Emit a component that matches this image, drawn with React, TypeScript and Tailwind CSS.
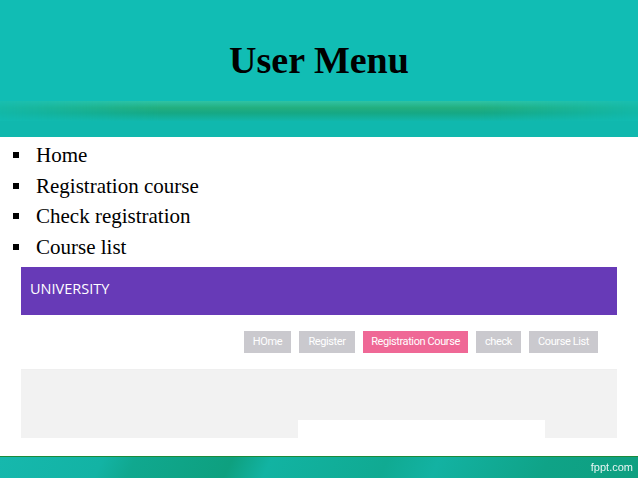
export default function App() {
  const items = ["Home", "Registration course", "Check registration", "Course list"];
  const buttons = [
    { label: "HOme", w: "w-[47px]", active: false },
    { label: "Register", w: "w-[56px]", active: false },
    { label: "Registration Course", w: "w-[105px]", active: true },
    { label: "check", w: "w-[45px]", active: false },
    { label: "Course List", w: "w-[69px]", active: false },
  ];

  return (
    <div className="w-[638px] h-[478px] overflow-hidden bg-white flex flex-col">
      {/* slide header */}
      <div className="h-[137px] shrink-0 flex flex-col bg-[#11bdb4]">
        <div className="h-[101px] flex justify-center pt-[41px]">
          <h1 className="text-[38px] leading-none font-bold text-black font-['Liberation_Serif',serif]">
            User Menu
          </h1>
        </div>
        <div className="h-[20px] bg-[linear-gradient(to_bottom,#2fc3a4_0%,#22ae7e_35%,#16a884_60%,#12b7aa_100%)] [mask-image:linear-gradient(to_right,rgba(0,0,0,0.25),black_25%,black_75%,rgba(0,0,0,0.25))]" />
        <div className="flex-1 bg-[#10b8ae]" />
      </div>

      {/* bullets */}
      <ul className="pt-[3px] font-['Liberation_Serif',serif] text-[21px] leading-[30.5px] text-black">
        {items.map((t) => (
          <li key={t} className="flex items-center">
            <span className="ml-[13px] w-[6px] h-[6px] bg-black" />
            <span className="ml-[17px]">{t}</span>
          </li>
        ))}
      </ul>

      {/* screenshot of the app */}
      <div className="mx-[21px] mt-[5px] flex flex-col font-['Open_Sans',sans-serif]">
        <div className="h-[48px] bg-[#673ab7] flex items-center pl-[9px] pb-[4px]">
          <span className="text-white text-[14.5px]">UNIVERSITY</span>
        </div>
        <div className="h-[55px] flex justify-end items-start pt-[16px] pr-[19px] gap-[8px] border-b border-[#efefef] font-['Roboto',sans-serif]">
          {buttons.map((b) => (
            <div
              key={b.label}
              className={`${b.w} h-[22px] flex items-center justify-center text-[11px] tracking-[-0.4px] text-white ${
                b.active ? "bg-[#ef6896]" : "bg-[#cac9ce]"
              }`}
            >
              {b.label}
            </div>
          ))}
        </div>
        <div className="h-[50px] bg-[#f2f2f2]" />
        <div className="h-[18px] flex">
          <div className="w-[277px] bg-[#f2f2f2]" />
          <div className="w-[247px] bg-white" />
          <div className="flex-1 bg-[#f2f2f2]" />
        </div>
      </div>

      {/* slide footer */}
      <div className="mt-auto h-[22px] shrink-0 border-t border-[#1c8a3a] bg-[linear-gradient(115deg,#16b8ad_0%,#13b3a4_16%,#10a88f_21%,#0ea07f_36%,#12b3a2_42%,#10aa92_60%,#13b2a2_68%,#0fa387_85%,#0e9f80_100%)] flex items-center justify-end pr-[5px]">
        <span className="text-white text-[11px] font-['Liberation_Sans',sans-serif] opacity-90">fppt.com</span>
      </div>
    </div>
  );
}
